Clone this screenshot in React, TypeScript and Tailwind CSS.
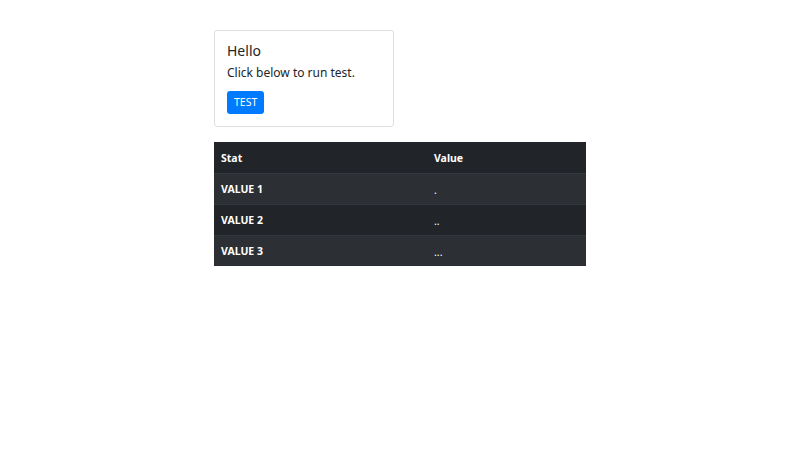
export default function App() {
  const rows = [
    { stat: 'VALUE 1', value: '.' },
    { stat: 'VALUE 2', value: '..' },
    { stat: 'VALUE 3', value: '...' },
  ]

  return (
    <div className="min-h-[450px] bg-white font-['Noto_Sans',sans-serif] text-[#212529]">
      <div className="w-[372px] ml-[214px] pt-[30px]">
        {/* Card */}
        <div className="w-[180px] h-[97px] rounded-[3px] border border-[#dfdfdf] px-[12px] pt-[11px]">
          <h5 className="text-[14px] leading-[18px] mb-[5px]">Hello</h5>
          <p className="text-[12px] leading-[16px] mb-[7px]">Click below to run test.</p>
          <button className="h-[23px] px-[7px] rounded-[3px] bg-[#007bff] text-white text-[10.5px] leading-[23px]">
            TEST
          </button>
        </div>

        {/* Table */}
        <table className="mt-[15px] w-[372px] border-collapse text-[10.5px] text-white">
          <thead>
            <tr className="bg-[#212529] h-[31px]">
              <th className="w-[220px] text-left font-bold pl-[7px] pt-[3px]">Stat</th>
              <th className="text-left font-bold pt-[3px]">Value</th>
            </tr>
          </thead>
          <tbody>
            {rows.map((r, i) => (
              <tr
                key={r.stat}
                className={`h-[31px] border-t border-[#32383e] ${i % 2 === 0 ? 'bg-[#2c3034]' : 'bg-[#212529]'}`}
              >
                <td className="pl-[7px] pt-[3px] font-bold">{r.stat}</td>
                <td className="pt-[4px]">{r.value}</td>
              </tr>
            ))}
          </tbody>
        </table>
      </div>
    </div>
  )
}
